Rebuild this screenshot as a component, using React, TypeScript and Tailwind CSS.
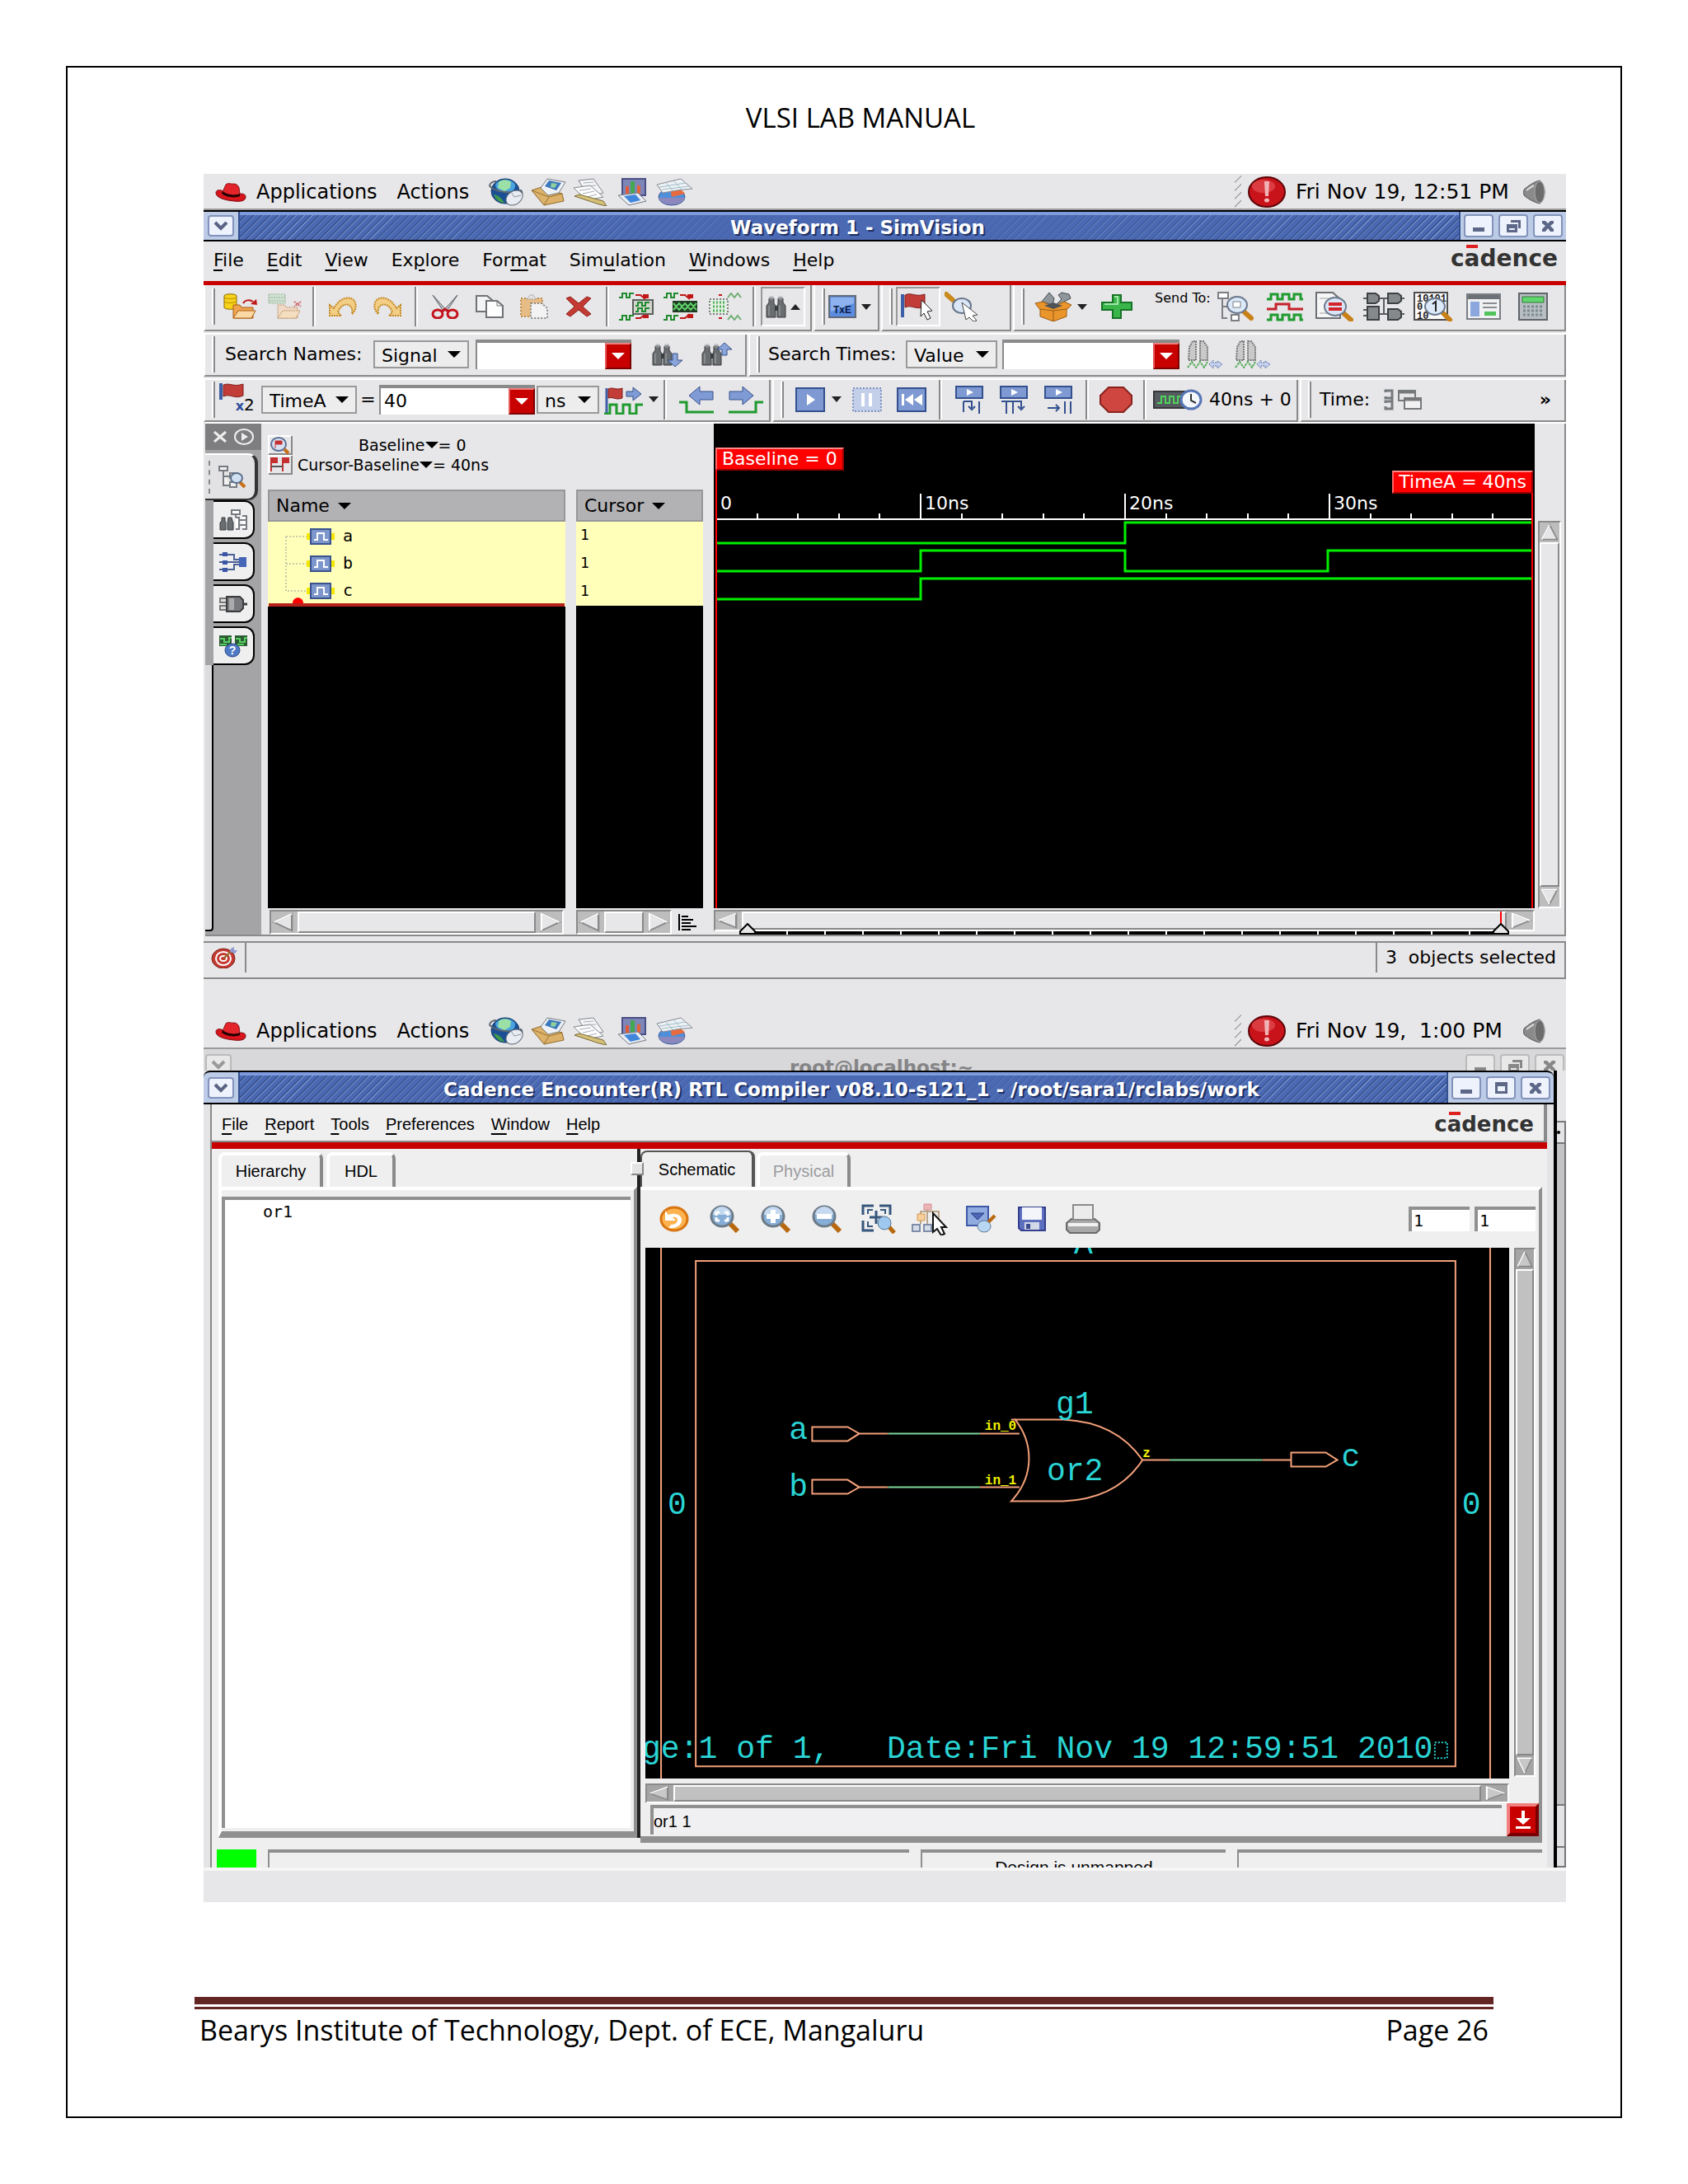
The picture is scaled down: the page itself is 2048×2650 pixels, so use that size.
import { useState } from 'react';
import type { ReactNode } from 'react';

interface IconProps {
  w?: number;
  h?: number;
  children: ReactNode;
}

function Icon({ w = 42, h = 32, children }: IconProps) {
  return (
    <svg width={w} height={h} viewBox={`0 0 ${w} ${h}`} fill="none" className="block shrink-0" aria-hidden="true">
      {children}
    </svg>
  );
}

/* ---------- desktop panel icons ---------- */

const RedHat = () => (
  <Icon w={38} h={24}>
    <path d="M1 13c0-4 5-4 9-2l18 3c5 0 9 0 9 4 0 5-7 6-14 5C12 22 1 19 1 13Z" fill="#d8141c" stroke="#7c0b10" />
    <path d="M9 12 13 3c3-3 7 0 9-1 4 0 6 2 7 5l1 8c-7 3-16 1-21-3Z" fill="#e3242b" stroke="#8b0d12" />
    <path d="M9 11c5 4 14 6 21 3v3c-7 3-17 1-22-3Z" fill="#220203" />
  </Icon>
);

const Globe = () => (
  <Icon w={44} h={34}>
    <ellipse cx="21" cy="16" rx="17" ry="15" fill="#1b4f95" stroke="#123c6e" />
    <path d="M9 8c4-7 20-8 24 0 1 5-3 9-9 9-8 0-15-3-15-9Z" fill="#4aa3dc" />
    <path d="M13 5c5-4 12-3 15 0l-1 7-7 4-8-4Z" fill="#9be0a6" />
    <path d="M7 20c6 1 10 5 13 10-6 0-11-4-13-10Z" fill="#3f9a4c" />
    <path d="M2 10c0-4 4-6 8-6M2 10c10 8 26 9 38 5 2 2 2 4 0 7" stroke="#5d666e" strokeWidth="2" />
    <ellipse cx="32" cy="24" rx="11" ry="8" fill="#e9edf3" stroke="#5f6a77" transform="rotate(-35 32 24)" />
    <path d="m28 17 4 6 8-2" stroke="#8b95a1" />
  </Icon>
);

const Mail = () => (
  <Icon w={44} h={34}>
    <path d="m2 15 12-4 25 8 2 9-24 5Z" fill="#dcb169" stroke="#8f6a2a" />
    <path d="m13 12 8-11 22 4-8 13-13 3Z" fill="#eef1f5" stroke="#767c84" />
    <path d="m18 10 5-7 15 3-6 9Z" fill="#3b78bd" />
    <path d="m26 6 7 1-3 5-5-1Z" fill="#8fd19a" />
    <path d="m2 15 21 8 16-4M23 23l-6 10" stroke="#9a7433" />
  </Icon>
);

const Writer = () => (
  <Icon w={44} h={34}>
    <path d="m8 3 18-2 12 17-18 5Z" fill="#f3f4f6" stroke="#82868c" />
    <path d="m2 12 20-3 16 14-20 4Z" fill="#fdfdfe" stroke="#82868c" />
    <path d="m14 6 12-1m-9 5 12-1M9 15l14-2m-10 6 14-3m-9 7 12-3" stroke="#a9adb4" />
    <path d="m3 22 6-2 29 8 4 6-9-2Z" fill="#d6c178" stroke="#7a6a35" />
  </Icon>
);

const Impress = () => (
  <Icon w={44} h={34}>
    <path d="M10 1h28v20H10Z" fill="#7e86b8" stroke="#4a4f86" strokeWidth="2" />
    <path d="M14 10h4v9h-4Z" fill="#e05a3a" />
    <path d="M20 4h5v15h-5Z" fill="#43a852" />
    <path d="M28 9h4v10h-4Z" fill="#e0663a" />
    <path d="m5 21 24-3 10 10-21 5Z" fill="#e9ecf1" stroke="#747a83" />
    <path d="m12 22 14-2 6 7-12 3Z" fill="#3f86dc" />
  </Icon>
);

const Calc = () => (
  <Icon w={46} h={34}>
    <ellipse cx="20" cy="23" rx="16" ry="10" fill="#4f8fd9" stroke="#3f5c96" />
    <path d="M20 23 18 12c9-1 15 3 18 7Z" fill="#ea6a3d" />
    <path d="M4 24c4 11 28 11 32 0Z" fill="#8c88bd" />
    <path d="m2 8 29-7 14 12-19 2-17 3Z" fill="#eef1f5" stroke="#858b93" />
    <path d="m5 11 32-5M8 14l33-4M12 5l9 10M22 3l10 11" stroke="#a0c0c8" />
  </Icon>
);

const Alert = () => (
  <Icon w={46} h={38}>
    <ellipse cx="23" cy="19" rx="22" ry="18" fill="#c9131a" stroke="#5d0508" strokeWidth="2" />
    <ellipse cx="19" cy="12" rx="14" ry="8" fill="#e8595d" opacity=".6" />
    <path d="M20 6h6l-1 18h-4Z" fill="#f1b4b5" />
    <ellipse cx="23" cy="29" rx="3" ry="2.5" fill="#f1b4b5" />
  </Icon>
);

const Speaker = () => (
  <Icon w={28} h={30}>
    <path d="M2 11c4-3 10-8 18-10 8 5 8 23 0 28-8-2-14-6-18-9-2-2-2-7 0-9Z" fill="#8a8a8a" stroke="#555" />
    <ellipse cx="20" cy="15" rx="6" ry="13" fill="#6c6c6c" stroke="#a9a9a9" />
    <path d="M4 13c4-3 7-5 9-6" stroke="#d8d8d8" strokeWidth="2" />
  </Icon>
);

/* ---------- SimVision toolbar icons ---------- */

const OpenDb = ({ off = false }: { off?: boolean }) => (
  <Icon>
    <g opacity={off ? 0.6 : 1} strokeDasharray={off ? '2 1' : undefined}>
      <path
        d={off ? 'M1 1h20v11H1Z' : 'M1 3c0-3 15-3 15 0v14c0 3-15 3-15 0Z'}
        fill={off ? '#c2e0c2' : '#f7d21b'}
        stroke={off ? '#6c8f6c' : '#8a6a00'}
      />
      <path d={off ? 'M1 5h20M1 9h20' : 'M1 5c3 2 12 2 15 0M1 10c3 2 12 2 15 0'} stroke={off ? '#6c8f6c' : '#b58b00'} />
      <path d="M12 14h8l2 3h14v13H12Z" fill={off ? '#f6d3b2' : '#f0a450'} stroke="#a85c12" />
      <path d="m12 30 6-9h21l-5 9Z" fill="#fcd9a4" stroke="#a85c12" />
      {off ? (
        <path d="m32 10 8 6m0-6-8 6" stroke="#c01818" strokeWidth="2" />
      ) : (
        <>
          <path d="M24 12c2-4 8-5 12-2" stroke="#c01818" strokeWidth="2" />
          <path d="m33 13 8 1-1-7Z" fill="#c01818" />
        </>
      )}
    </g>
  </Icon>
);

const Undo = ({ flip = false }: { flip?: boolean }) => (
  <Icon w={34} h={24}>
    <g transform={flip ? 'matrix(-1 0 0 1 34 0)' : undefined}>
      <path d="M1 10v13h14l-4-4c2-7 8-11 13-9 4 2 5 6 4 11 6-5 6-14 1-18C22-1 12 3 6 14Z" fill="#f3cf86" stroke="#c48720" strokeWidth="2" strokeDasharray="2 1" />
    </g>
  </Icon>
);

const Cut = () => (
  <Icon w={34} h={30}>
    <path d="m2 1 17 19-5-1Zm30 0L15 20l5-1Z" fill="#c4c8cc" stroke="#555b60" />
    <ellipse cx="8" cy="24" rx="6" ry="5" stroke="#c4131c" strokeWidth="3" />
    <ellipse cx="26" cy="24" rx="6" ry="5" stroke="#c4131c" strokeWidth="3" />
    <path d="m13 21 4-3 4 3" stroke="#c4131c" strokeWidth="3" />
  </Icon>
);

const Copy = () => (
  <Icon w={34} h={28}>
    <path d="M1 1h13l6 5v14H1Z" fill="#f4f4f4" stroke="#6f7376" strokeWidth="2" />
    <path d="M13 7h13l7 6v14H13Z" fill="#fdfdfd" stroke="#6f7376" strokeWidth="2" />
    <path d="M26 7v6h7" stroke="#6f7376" />
  </Icon>
);

const Paste = () => (
  <Icon w={34} h={30}>
    <path d="M1 5h26v22H1Z" fill="#e8bd85" stroke="#bd8f4e" strokeWidth="2" strokeDasharray="2 2" />
    <path d="M8 6c0-2 3-2 4-5h4c1 3 4 3 4 5Z" fill="#e0e0e0" stroke="#999" strokeDasharray="2 1" />
    <path d="M13 11h13l7 6v12H13Z" fill="#f3f3f3" stroke="#8c8c8c" strokeWidth="2" strokeDasharray="2 2" />
  </Icon>
);

const Remove = () => (
  <Icon w={34} h={26}>
    <path d="m2 3 5-2 10 8L27 1l5 2-10 10 10 9-5 3-10-8-10 8-5-3 10-9Z" fill="#c43a33" stroke="#8d1f1a" />
  </Icon>
);

const WaveGlyph = ({ mode }: { mode: 'chip' | 'fill' | 'off' }) => {
  const c = mode === 'off' ? '#6fae72' : '#1f8a2c';
  return (
    <Icon w={42} h={34}>
      <path d={mode === 'off' ? 'M24 6l4-5 4 5 4-5 4 5M24 33l4-5 4 5 4-5 4 5' : 'M0 6h4V1h5v5h4V1h5M0 33h4v-5h5v5h4v-5h5'} stroke={c} strokeWidth="2" />
      <path d={mode === 'off' ? 'M13 3h4m-4 28h4' : 'M20 3h6l6 5M20 31h6l6-5'} stroke="#c01818" strokeWidth="2" />
      {mode !== 'off' && <path d="M29 2h7v5h-7zM29 26h7v5h-7z" fill="#c01818" />}
      {mode === 'chip' && (
        <>
          <path d="M17 9h24v17H17Z" fill="#d2d6cf" stroke="#5c605c" strokeWidth="2" />
          <path d="M20 16h3v-4h5v4h4v-4h5M20 23h3v-4h5v4h4v-4h5" stroke="#1f8a2c" strokeWidth="2" />
        </>
      )}
      {mode === 'fill' && (
        <>
          <path d="M11 10h30v14H11Z" fill="#1f3d22" />
          <path d="m12 13 7 8 7-8 7 8 7-8M12 21l7-8 7 8 7-8 7 8" stroke="#5fd069" strokeWidth="2" />
        </>
      )}
      {mode === 'off' && (
        <>
          <path d="M2 8h22v18H2Z" fill="#e4f0e4" stroke="#7d7d7d" strokeWidth="2" strokeDasharray="2 2" />
          <path d="M6 12h14M6 17h14M6 22h14" stroke="#4fae58" strokeWidth="3" strokeDasharray="2 2" />
        </>
      )}
    </Icon>
  );
};

const Binoculars = ({ arrow }: { arrow?: 'up' | 'down' }) => (
  <Icon w={arrow ? 38 : 26} h={30}>
    <path d="M4 5h6v6l2 3V28H1V14l3-4ZM15 5h6v5l3 4v14H14V14l1-3Z" fill="#696d70" stroke="#3a3d3f" />
    <path d="M5 3h4v3H5zM16 3h4v3h-4zM4 14v12M17 14v12" stroke="#a7abae" />
    <path d="M11 14h4v6h-4Z" fill="#3a3d3f" />
    {arrow === 'down' && <path d="M25 14h6v8h6l-9 8-9-8h6Z" fill="#8aa5da" stroke="#37508c" />}
    {arrow === 'up' && <path d="M25 16h6V9h6l-9-8-9 8h6Z" fill="#8aa5da" stroke="#37508c" />}
  </Icon>
);

const SearchTime = () => (
  <Icon w={44} h={34}>
    <path d="M3 8 7 1h4v23H2ZM16 1h4l5 7v16h-9Z" fill="#c9c9c9" stroke="#777" strokeWidth="2" strokeDasharray="2 1" />
    <path d="m1 33 5-7 5 7 5-7 5 7 4-7" stroke="#57ad5d" strokeWidth="2" strokeDasharray="3 1" />
    <path d="m27 29 5-5v3h5v-2l6 4-6 5v-3h-5v3Z" fill="#c4d0ec" stroke="#5f76b0" strokeDasharray="2 1" />
  </Icon>
);

const TxE = () => (
  <Icon w={34} h={28}>
    <path d="M1 1h32v26H1Z" fill="#5c8de0" stroke="#636b7a" strokeWidth="2" />
    <path d="M3 3h28v7L3 20Z" fill="#8db2ef" />
    <text x="17" y="22" textAnchor="middle" fontFamily="Liberation Sans" fontSize="12" fontWeight="700" fill="#0c1c46">TxE</text>
  </Icon>
);

const Flag = () => (
  <Icon w={44} h={34}>
    <path d="M3 2v28" stroke="#3c5fa8" strokeWidth="4" />
    <path d="M6 3c8-4 12 3 24-1v15c-10 5-16-3-24 1Z" fill="#c23d38" stroke="#7e1d1a" />
    <path d="m26 9 13 13-6 1 4 8-4 2-4-8-4 4Z" fill="#fff" stroke="#222" />
  </Icon>
);

const FlagX2 = () => (
  <div className="flex w-14 flex-col pr-2">
    <Icon w={36} h={20}>
      <path d="M3 0v20" stroke="#3c5fa8" strokeWidth="4" />
      <path d="M6 2c8-3 12 3 24-1v14c-10 5-16-3-24 1Z" fill="#c23d38" stroke="#7e1d1a" />
    </Icon>
    <span className="-mt-1 self-end text-xl leading-5">
      <b className="text-base text-[#2b4b9b]">x</b>2
    </span>
  </div>
);

const ZoomCursor = () => (
  <Icon w={44} h={36}>
    <path d="m2 3 8 7" stroke="#c98b1e" strokeWidth="6" strokeLinecap="round" />
    <ellipse cx="21" cy="17" rx="11" ry="9" fill="#dbe7f7" stroke="#66748a" strokeWidth="2" />
    <path d="m21 13 19 15-6 1 5 6-4 1-5-5-4 3Z" fill="#fff" stroke="#444" />
  </Icon>
);

const Toolbox = () => (
  <Icon w={46} h={36}>
    <path d="m9 12 9-11 6 7-2 8ZM27 15l6-6-4-5 4-3 9 2 2 5-6 3-7 5Z" fill="#8f979c" stroke="#41484d" />
    <path d="m1 14 9-2 13 6 13-6 9 4-6 6v8l-16 6-16-6v-8Z" fill="#e9952c" stroke="#9c5b10" />
    <path d="m12 17 11-4 11 4-11 4Z" fill="#4e5357" />
    <path d="M23 23v13M7 21l16 2 16-2" stroke="#9c5b10" />
  </Icon>
);

const Plus = () => (
  <Icon w={38} h={30}>
    <path d="M14 1h10v9h13v9H24v10H14V19H1v-9h13Z" fill="#39b54a" stroke="#177326" strokeWidth="2" />
    <path d="M16 3h4v9H4" stroke="#a3e6aa" strokeWidth="2" />
  </Icon>
);

const HierZoom = () => (
  <Icon w={44} h={36}>
    <path d="M6 8v24h6M6 18h8" stroke="#7b7f83" strokeWidth="2" />
    <path d="M1 1h12v7H1ZM17 28h9v7h-9Z" stroke="#7b7f83" strokeWidth="2" fill="#fff" />
    <path d="m32 24 9 8" stroke="#c98018" strokeWidth="6" strokeLinecap="round" />
    <ellipse cx="24" cy="16" rx="12" ry="10" fill="#dce9f8" stroke="#6b7a8e" strokeWidth="2" />
    <path d="M19 12h9v7h-9Z" fill="#fff" stroke="#7b7f83" />
  </Icon>
);

const SendWave = () => (
  <Icon w={44} h={36}>
    <path d="M0 9h5V3h8v6h6V3h8v6h6V3h8v6h3M0 34h5v-6h8v6h6v-6h8v6h6v-6h8v6h3" stroke="#1f9a2e" strokeWidth="3" />
    <path d="M0 21h11v-6h16v6h17" stroke="#c4232a" strokeWidth="3" />
  </Icon>
);

const DocZoom = () => (
  <Icon w={46} h={36}>
    <path d="M1 1h20l9 8v23H1Z" fill="#f6f6f6" stroke="#6c7074" strokeWidth="2" />
    <path d="M5 8h12M5 26h18" stroke="#9b9fa3" />
    <path d="m34 26 9 8" stroke="#c98018" strokeWidth="6" strokeLinecap="round" />
    <ellipse cx="24" cy="18" rx="13" ry="11" fill="#d9e5f6" stroke="#6b7a8e" strokeWidth="2" />
    <path d="M16 13h16v4H16zm0 6h16v4H16z" fill="#d5242b" />
  </Icon>
);

const Schem = () => (
  <Icon w={50} h={34}>
    <path d="M0 7h50M0 21h8M0 28h8M20 26h30M25 7v19" stroke="#5a5e61" strokeWidth="2" />
    <path d="M5 1h10l4 3v6l-4 3H5ZM30 1h12l4 3v6l-4 3H30ZM5 17h14v16H5ZM30 20h12l4 3v7l-4 3H30Z" fill="#86898c" stroke="#3e4143" strokeWidth="2" />
  </Icon>
);

const BinZoom = () => (
  <Icon w={48} h={36}>
    <path d="M1 1h40v33H1Z" fill="#fbfbfb" stroke="#4d4d4d" strokeWidth="2" />
    <text x="4" y="12" fontFamily="Liberation Mono" fontSize="12" fontWeight="700" fill="#222">10101</text>
    <text x="4" y="22" fontFamily="Liberation Mono" fontSize="12" fontWeight="700" fill="#222">0</text>
    <text x="4" y="33" fontFamily="Liberation Mono" fontSize="12" fontWeight="700" fill="#222">10</text>
    <path d="m36 26 8 8" stroke="#c98018" strokeWidth="6" strokeLinecap="round" />
    <ellipse cx="26" cy="18" rx="12" ry="10" fill="#dce9f8" stroke="#6b7a8e" strokeWidth="2" />
    <path d="m23 15 4-3v12" stroke="#222" strokeWidth="2" />
  </Icon>
);

const Form = () => (
  <Icon w={42} h={32}>
    <path d="M1 1h40v30H1Z" fill="#f0f1f2" stroke="#7a7e82" strokeWidth="2" />
    <path d="M2 2h38v5H2Z" fill="#6c7178" />
    <path d="M5 10h11v18H5Z" fill="#8ba7dd" />
    <path d="M20 12h17M20 17h17" stroke="#8b8f93" strokeWidth="2" />
    <path d="M22 22h14v5H22Z" fill="#4fc45b" />
  </Icon>
);

const Calculator = () => (
  <Icon w={36} h={34}>
    <path d="M1 1h34v32H1Z" fill="#b9bec2" stroke="#60666b" strokeWidth="2" />
    <path d="M5 5h26v7H5Z" fill="#5fd76c" stroke="#34793c" />
    <path d="M6 17h24M6 22h24M6 27h24" stroke="#7b8b94" strokeWidth="3" strokeDasharray="3 2" />
  </Icon>
);

const JumpFlag = () => (
  <Icon w={50} h={36}>
    <path d="M3 4v30" stroke="#3c5fa8" strokeWidth="3" />
    <path d="M5 5c6-3 9 2 17-1v12c-8 3-11-2-17 0Z" fill="#c23d38" stroke="#7e1d1a" />
    <path d="M27 8h8V3l10 8-10 8v-5h-8Z" fill="#7f9bd6" stroke="#37508c" />
    <path d="M0 35h7V24h8v11h8V24h8v11h8V24h8" stroke="#1f9a2e" strokeWidth="3" />
  </Icon>
);

const EdgeArrow = ({ right = false }: { right?: boolean }) => (
  <Icon w={44} h={34}>
    <g transform={right ? 'matrix(-1 0 0 1 44 0)' : undefined}>
      <path d="M12 12 25 1v6h16v10H25v6Z" fill="#7f9bd6" stroke="#37508c" />
      <path d="M0 20h9v12h33" stroke="#1f9a2e" strokeWidth="3" />
    </g>
  </Icon>
);

const Play = ({ kind }: { kind: 'play' | 'pause' | 'rewind' }) => (
  <Icon w={36} h={30}>
    <path
      d="M1 1h34v28H1Z"
      fill={kind === 'pause' ? '#c3cfe9' : '#7f9ad2'}
      stroke={kind === 'pause' ? '#7f92c0' : '#33508f'}
      strokeWidth="2"
      strokeDasharray={kind === 'pause' ? '2 2' : undefined}
    />
    {kind === 'play' && <path d="m14 8 10 7-10 7Z" fill="#fff" />}
    {kind === 'pause' && <path d="M13 7v16M22 7v16" stroke="#fff" strokeWidth="4" />}
    {kind === 'rewind' && <path d="M6 8h3v14H6zM20 8v14L10 15ZM31 8v14l-10-7Z" fill="#fff" />}
  </Icon>
);

const Step = ({ tail }: { tail: string }) => (
  <Icon w={34} h={34}>
    <path d="M1 1h32v14H1Z" fill="#7f9ad2" stroke="#33508f" strokeWidth="2" />
    <path d="m14 4 8 4-8 4Z" fill="#fff" />
    <path d={tail} stroke="#33508f" strokeWidth="2" />
  </Icon>
);

const StopSign = () => (
  <Icon w={40} h={32}>
    <path d="M11 1h18l10 10v10L29 31H11L1 21V11Z" fill="#cf4640" stroke="#8a211d" strokeWidth="2" />
  </Icon>
);

const WaveClock = () => (
  <Icon w={60} h={26}>
    <path d="M1 3h40v20H1Z" fill="#565b60" stroke="#33373a" strokeWidth="2" />
    <path d="M5 17h5v-8h5v8h5v-8h5v8h5v-8h4" stroke="#4fd45b" strokeWidth="2" />
    <ellipse cx="46" cy="13" rx="12" ry="11" fill="#f4f8fd" stroke="#5775b5" strokeWidth="3" />
    <path d="M46 6v8l6 3" stroke="#333" strokeWidth="2" />
  </Icon>
);

const TimeLink = () => (
  <Icon w={48} h={26}>
    <path d="M3 4V2h8v9H3V9M3 17v-2h8v9H3v-3M11 11v4" stroke="#76797c" strokeWidth="3" />
    <path d="M19 2h20v12H19Z" fill="#e6e6e6" stroke="#76797c" strokeWidth="2" />
    <path d="M26 11h20v13H26Z" fill="#f2f2f2" stroke="#76797c" strokeWidth="2" />
    <path d="M19 4h20M26 13h20" stroke="#76797c" strokeWidth="3" />
  </Icon>
);

/* ---------- small shared parts ---------- */

const Caret = ({ white = false }: { white?: boolean }) => (
  <svg width="16" height="8" viewBox="0 0 16 8" className="shrink-0" aria-hidden="true">
    <path d="M0 0h16L8 8Z" fill={white ? '#fff' : '#000'} />
  </svg>
);

const SmallCaret = ({ up = false }: { up?: boolean }) => (
  <svg width="12" height="7" viewBox="0 0 12 7" className="shrink-0" aria-hidden="true">
    <path d={up ? 'M0 7h12L6 0Z' : 'M0 0h12L6 7Z'} fill="#222" />
  </svg>
);

const Grip = () => <div className="ml-2 mr-1 h-11 w-1 shrink-0 border-l-2 border-r-2 border-l-white border-r-[#888]" />;
const Sep = () => <div className="mx-1.5 h-12 w-1 shrink-0 border-l-2 border-r-2 border-l-[#888] border-r-white" />;

function Slot({ label, children, className = 'w-[54px]' }: { label: string; children: ReactNode; className?: string }) {
  return (
    <button type="button" aria-label={label} className={`flex h-12 shrink-0 items-center justify-center ${className}`}>
      {children}
    </button>
  );
}

function Bar({ className, children }: { className: string; children: ReactNode }) {
  return (
    <div className={`flex items-center overflow-hidden border-b-2 border-l-2 border-r-2 border-b-[#8a8a8a] border-l-white border-r-[#8a8a8a] pb-0.5 ${className}`}>
      {children}
    </div>
  );
}

function Picker({ label, options, className }: { label: string; options: string[]; className: string }) {
  return (
    <span className={`relative flex h-[34px] shrink-0 items-center border-2 border-[#999] bg-[#ededee] ${className}`}>
      <select aria-label={label} className="h-full w-full appearance-none bg-transparent pl-2 outline-none">
        {options.map((o) => (
          <option key={o}>{o}</option>
        ))}
      </select>
      <span className="pointer-events-none absolute right-2">
        <Caret />
      </span>
    </span>
  );
}

function Combo({ label, initial = '', className }: { label: string; initial?: string; className: string }) {
  const [value, setValue] = useState(initial);
  return (
    <span className={`flex h-9 shrink-0 border-l-2 border-t-4 border-[#8a8a8a] bg-white ${className}`}>
      <input aria-label={label} value={value} onChange={(e) => setValue(e.target.value)} className="min-w-0 flex-1 px-1 outline-none" />
      <button type="button" aria-label={`${label} history`} className="flex w-8 items-center justify-center border-2 border-b-[#7a0000] border-l-[#e65a5a] border-r-[#7a0000] border-t-[#f08080] bg-[#c80000]">
        <Caret white />
      </button>
    </span>
  );
}

function Menu({ items }: { items: [string, string, string][] }) {
  return items.map(([a, key, b]) => (
    <button key={a + key + b} type="button">
      {a}
      <u className="underline-offset-4">{key}</u>
      {b}
    </button>
  ));
}

const Cadence = ({ className }: { className: string }) => (
  <span className={`font-bold leading-8 text-[#333] ${className}`}>
    c
    <span className="relative">
      a<span className="absolute left-0.5 top-0 h-1 w-3.5 bg-[#e02020]" />
    </span>
    dence
  </span>
);

const WinMenuIcon = ({ off = false }: { off?: boolean }) => (
  <span className={`flex h-[26px] w-8 items-center justify-center rounded border-2 ${off ? 'border-[#bbb] bg-[#e8e8e8]' : 'border-[#8292bb] bg-[#edf2fc]'}`}>
    <svg width="18" height="12" viewBox="0 0 18 12" aria-hidden="true">
      <path d="m2 2 7 7 7-7" fill="none" stroke={off ? '#999' : '#596383'} strokeWidth="4" />
    </svg>
  </span>
);

const WIN_SHAPES = {
  min: 'M4 11h14v5H4Z',
  restore: 'M8 2h12v10h-3V5H8Zm-5 5h13v10H3Zm3 5v2h7v-2Z',
  max: 'M4 2h15v14H4Zm3 5v6h9V7Z',
  close: 'M4 3h4l3 3 3-3h4v3l-4 3 4 4v3h-4l-3-4-3 4H4v-3l4-4-4-3Z',
};

function WinButtons({ kinds, off = false }: { kinds: (keyof typeof WIN_SHAPES)[]; off?: boolean }) {
  return (
    <div className="flex gap-1.5">
      {kinds.map((k) => (
        <button
          key={k}
          type="button"
          aria-label={k}
          className={`flex h-7 w-9 items-center justify-center rounded border-2 ${off ? 'border-[#bbb] bg-[#e8e8e8]' : 'border-[#8292bb] bg-[#edf2fc]'}`}
        >
          <svg width="22" height="18" viewBox="0 0 22 18" aria-hidden="true">
            <path d={WIN_SHAPES[k]} fill={off ? '#888' : '#5d6788'} fillRule="evenodd" />
          </svg>
        </button>
      ))}
    </div>
  );
}

function TitleBar({ title, kinds, className }: { title: string; kinds: (keyof typeof WIN_SHAPES)[]; className: string }) {
  return (
    <div className={`flex items-stretch overflow-hidden border-b-2 border-t-2 border-black bg-[#bccbe6] ${className}`}>
      <div className="flex w-11 shrink-0 items-center justify-center border-r-2 border-[#33508f]">
        <WinMenuIcon />
      </div>
      <div className="flex flex-1 items-center justify-center border-t-4 border-[#7d9bdc] bg-[linear-gradient(90deg,transparent,#4b69b3_50%,transparent),repeating-linear-gradient(135deg,#4b69b3_0px,#4b69b3_4px,#2b4580_5px,#8aa5de_7px)] pl-5">
        <span className="text-[23px] font-bold leading-7 text-white [text-shadow:2px_2px_0_#1c2f63]">{title}</span>
      </div>
      <div className="flex shrink-0 items-center border-l-2 border-[#33508f] px-1">
        <WinButtons kinds={kinds} />
      </div>
    </div>
  );
}

function DesktopPanel({ time }: { time: string }) {
  return (
    <div className="flex h-11 items-center border-b-2 border-[#9a9a9a] pl-3.5 pr-6 pt-0.5 text-2xl">
      <RedHat />
      <button type="button" className="ml-3">Applications</button>
      <button type="button" className="ml-6">Actions</button>
      <div className="ml-[19px] flex">
        {[Globe, Mail, Writer, Impress, Calc].map((I, i) => (
          <span key={i} className="flex w-[51px] justify-center">
            <I />
          </span>
        ))}
      </div>
      <div className="ml-auto h-10 w-2 bg-[repeating-linear-gradient(135deg,transparent_0px,transparent_5px,#888_6px,transparent_7px)]" />
      <span className="ml-2">
        <Alert />
      </span>
      <span className="ml-3 w-[276px] whitespace-pre text-[25px]">{time}</span>
      <Speaker />
    </div>
  );
}

const ARROWS = {
  left: 'M22 3v22L3 14Z',
  right: 'M6 3v22l19-11Z',
  up: 'M3 24h22L14 3Z',
  down: 'M3 4h22L14 25Z',
};

const HIGHLIGHTS = {
  left: 'M3 14 22 3',
  right: 'M6 25V3l19 11',
  up: 'M3 24 14 3',
  down: 'M14 25 3 4h22',
};

function ArrowBox({ dir, dark = false }: { dir: keyof typeof ARROWS; dark?: boolean }) {
  return (
    <svg
      viewBox="0 0 28 28"
      preserveAspectRatio="none"
      className={dir === 'left' || dir === 'right' ? 'h-full w-8 shrink-0' : 'h-6 w-full shrink-0'}
      aria-hidden="true"
    >
      <path d="M0 0h28v28H0Z" fill={dark ? '#a5a5a5' : '#bdbdbd'} />
      <path d={ARROWS[dir]} fill={dark ? '#c8c8c8' : '#e6e6e8'} stroke="#888" strokeWidth="2" />
      <path d={HIGHLIGHTS[dir]} fill="none" stroke="#fff" strokeWidth="2" />
    </svg>
  );
}

function Scroll({ vertical = false, dark = false, className = '' }: { vertical?: boolean; dark?: boolean; className?: string }) {
  return (
    <div className={`flex items-center border-2 border-b-white border-l-[#8a8a8a] border-r-white border-t-[#8a8a8a] bg-[#c6c6c8] ${vertical ? 'flex-col' : ''} ${className}`}>
      <ArrowBox dir={vertical ? 'up' : 'left'} dark={dark} />
      <div className={`flex-1 border-2 border-b-[#888] border-l-white border-r-[#888] border-t-white ${vertical ? 'w-full' : 'h-full'} ${dark ? 'bg-[#c2c1c2]' : 'bg-[#e7e6e8]'}`} />
      <ArrowBox dir={vertical ? 'down' : 'right'} dark={dark} />
    </div>
  );
}

/* ---------- waveform window ---------- */

const SIGNALS = [
  { name: 'a', value: '1', path: 'M0 28H497V3H992', tree: 'M1 18v16M1 18h28' },
  { name: 'b', value: '1', path: 'M0 28H249V3H497V28H743V3H992', tree: 'M1 0v33M1 18h28' },
  { name: 'c', value: '1', path: 'M0 28H249V3H992', tree: 'M1 0v18h28' },
];

const RULER = ['0', '10ns', '20ns', '30ns'];

function SideTabs() {
  const tab = 'ml-2.5 mr-2 flex h-[47px] items-center justify-center rounded-r-xl border-b-2 border-r-2 border-t-2 border-black bg-[#efeff0]';
  return (
    <div className="flex w-[68px] shrink-0 flex-col bg-[#a4a4a6]">
      <div className="flex h-8 items-center justify-center gap-2 bg-[#7e7e80]">
        <svg width="18" height="14" viewBox="0 0 18 14" aria-hidden="true">
          <path d="m2 1 14 12M16 1 2 13" stroke="#eee" strokeWidth="3" />
        </svg>
        <svg width="24" height="20" viewBox="0 0 24 20" aria-hidden="true">
          <ellipse cx="12" cy="10" rx="11" ry="9" fill="none" stroke="#eee" strokeWidth="2" />
          <path d="m9 5 8 5-8 5Z" fill="#eee" />
        </svg>
      </div>
      <button type="button" aria-label="Design browser" className="mr-1 mt-1 flex h-[57px] items-center gap-2.5 rounded-r-xl border-b-2 border-r-4 border-t-2 border-b-[#333] border-r-[#333] border-t-white bg-[#e2e2e4] pl-1">
        <span className="h-10 border-l-2 border-dashed border-[#888]" />
        <Icon w={34} h={28}>
          <path d="M1 1h10v5H1ZM6 6v18h8M6 13h8M14 9h8v6h-8ZM14 20h8v6h-8Z" fill="#f2f2f2" stroke="#777b80" strokeWidth="2" />
          <path d="m26 20 6 6" stroke="#c9701a" strokeWidth="4" />
          <ellipse cx="22" cy="15" rx="7" ry="6" fill="#cfe0f2" stroke="#5a6f8c" strokeWidth="2" />
        </Icon>
      </button>
      <div className="flex flex-1 flex-col gap-1">
        <button type="button" aria-label="Search" className={tab}>
          <Icon w={34} h={26}>
            <path d="M15 1h10v5H15ZM20 6v4M20 10h4v14h-4M28 8h5v16h-5M24 13h8M24 19h8" stroke="#777b80" strokeWidth="2" fill="#fff" />
            <path d="M3 10h4v4l1 2v9H1v-9l2-2ZM11 10h4l1 4 1 2v9h-7v-9Z" fill="#6b6e71" stroke="#3b3d3f" />
          </Icon>
        </button>
        <button type="button" aria-label="Groups" className={tab}>
          <Icon w={34} h={24}>
            <path d="M0 3h18v6h6M0 12h24M0 21h18v-6h6" stroke="#4a5f95" strokeWidth="2" />
            <path d="M4 0h6v5H4zM4 10h6v5H4zM4 19h6v5H4z" fill="#3957a5" />
            <path d="M24 6h9v12h-9Z" fill="#4565b8" />
          </Icon>
        </button>
        <button type="button" aria-label="Schematic" className={tab}>
          <Icon w={34} h={22}>
            <path d="M1 4h9v5H1zM1 13h9v5H1z" fill="#ddd" stroke="#777" strokeWidth="2" />
            <path d="M9 2h16l4 4v10l-4 4H9Z" fill="#77797c" stroke="#3b3d3f" strokeWidth="2" />
            <path d="M12 4h6v14h-6Z" fill="#a9abad" />
            <path d="M30 11h4" stroke="#3b3d3f" strokeWidth="3" />
          </Icon>
        </button>
        <button type="button" aria-label="Compare" className={tab}>
          <Icon w={34} h={28}>
            <path d="M0 1h15v13H0zM19 1h15v13H19z" fill="#2c5a33" />
            <path d="M1 5h5v4h6V4h3M20 5h5v4h6V4h3M1 12h8M22 12h8" stroke="#56cf62" strokeWidth="2" />
            <ellipse cx="16" cy="19" rx="9" ry="8" fill="#4f78c4" stroke="#2c4b88" />
            <text x="16" y="24" textAnchor="middle" fontFamily="Liberation Sans" fontSize="14" fontWeight="700" fill="#fff">?</text>
          </Icon>
        </button>
        <div className="-mt-1 mb-1 w-2.5 flex-1 rounded-br border-b-2 border-r-2 border-black bg-[#dcdcde]" />
      </div>
    </div>
  );
}

function SignalPanes() {
  const head = 'h-[37px] border-2 border-[#97969a] bg-[#b2b1b4] px-2 text-left font-normal';
  return (
    <div className="ml-2 mr-[13px] flex w-[528px] shrink-0 flex-col">
      <div className="flex h-20 flex-col justify-center pb-1 text-[19px] leading-6">
        <div className="flex items-center">
          <Icon w={30} h={24}>
            <path d="M1 23V1h28" stroke="#fff" strokeWidth="2" />
            <path d="M29 1v22H1" stroke="#888" strokeWidth="2" />
            <ellipse cx="13" cy="11" rx="9" ry="8" fill="#d7e2f3" stroke="#5c6f94" strokeWidth="2" />
            <path d="M9 16V7h8v4H9" fill="#c43030" stroke="#c43030" />
            <path d="m20 17 5 5" stroke="#c9701a" strokeWidth="4" />
          </Icon>
          <span className="ml-20 flex items-center">
            Baseline
            <Caret />= 0
          </span>
        </div>
        <div className="flex items-center">
          <Icon w={30} h={24}>
            <path d="M1 23V1h28" stroke="#fff" strokeWidth="2" />
            <path d="M29 1v22H1" stroke="#888" strokeWidth="2" />
            <path d="M4 20V4h7v5H4M18 20V4h7v5h-7" fill="#c43030" stroke="#c43030" strokeWidth="2" />
            <path d="M4 14h14" stroke="#555" strokeWidth="2" />
          </Icon>
          <span className="ml-1.5 flex items-center">
            Cursor-Baseline
            <Caret />= 40ns
          </span>
        </div>
      </div>
      <div className="flex flex-1 justify-between">
        <div className="flex w-[361px] flex-col bg-black">
          <table className="w-full border-collapse border-b-4 border-[#b8211b] bg-[#ffffba]">
            <thead>
              <tr>
                <th className={head}>
                  <span className="flex items-center gap-2.5">
                    Name <Caret />
                  </span>
                </th>
              </tr>
            </thead>
            <tbody className="font-['DejaVu_Sans_Mono',monospace] text-xl">
              {SIGNALS.map((s) => (
                <tr key={s.name} className="h-[33px]">
                  <td className="p-0">
                    <span className="flex h-[33px] items-center pl-5">
                      <Icon w={62} h={33}>
                        <path d={s.tree} stroke="#999" strokeDasharray="2 2" />
                        {s.name === 'c' && <path d="M9 33c0-9 13-9 13 0Z" fill="#f00" />}
                        <path d="M26 14h34v8H26Z" fill="#f4e800" />
                        <path d="M31 9h24v18H31Z" fill="#7d96cb" stroke="#39538f" strokeWidth="2" />
                        <path d="M35 22h4v-8h8v8h5" stroke="#fff" strokeWidth="2" />
                      </Icon>
                      <span className="ml-2">{s.name}</span>
                    </span>
                  </td>
                </tr>
              ))}
            </tbody>
          </table>
        </div>
        <div className="flex w-[154px] flex-col bg-black">
          <table className="w-full border-collapse bg-[#ffffba]">
            <thead>
              <tr>
                <th className={head}>
                  <span className="flex items-center gap-2.5">
                    Cursor <Caret />
                  </span>
                </th>
              </tr>
            </thead>
            <tbody className="font-['DejaVu_Sans_Mono',monospace] text-lg">
              {SIGNALS.map((s) => (
                <tr key={s.name} className="h-[34px]">
                  <td className="px-1 pb-0.5 pt-0 leading-8">{s.value}</td>
                </tr>
              ))}
            </tbody>
          </table>
        </div>
      </div>
      <div className="flex h-8 justify-between pt-0.5">
        <Scroll className="ml-0.5 w-[357px]" />
        <div className="flex w-[154px] items-center">
          <Scroll className="h-full w-[116px]" />
          <span className="mx-auto">
            <Icon w={24} h={20}>
              <path d="M2 0v20M5 3h8M5 7h14M5 11h11M5 15h18M5 19h11" stroke="#000" strokeWidth="2" />
            </Icon>
          </span>
        </div>
      </div>
    </div>
  );
}

function WavePane() {
  const marker = 'border-2 border-b-[#900] border-l-[#f66] border-r-[#900] border-t-[#f88] bg-[#f00] px-1.5 leading-6';
  return (
    <div className="flex min-w-0 flex-1 flex-col">
      <div className="relative flex flex-1 flex-col border-x-2 border-black bg-black text-white">
        <div className="mt-[29px] flex">
          <span className={marker}>Baseline = 0</span>
        </div>
        <div className="flex justify-end">
          <span className={marker}>TimeA = 40ns</span>
        </div>
        <div className="flex h-8 border-b-2 border-white">
          {RULER.map((t, i) => (
            <div key={t} className={`relative flex-1 border-l-2 pl-1 leading-6 ${i ? 'border-white' : 'border-transparent'}`}>
              {t}
              <div className="absolute inset-x-0 bottom-0 flex h-1.5 justify-evenly">
                {[1, 2, 3, 4].map((k) => (
                  <span key={k} className="w-0.5 bg-white" />
                ))}
              </div>
            </div>
          ))}
        </div>
        {SIGNALS.map((s) => (
          <svg key={s.name} viewBox="0 0 992 34" preserveAspectRatio="none" className="h-[34px] w-full" aria-hidden="true">
            <path d={s.path} fill="none" stroke="#00f000" strokeWidth="3" />
          </svg>
        ))}
        <span className="absolute bottom-0 left-0 top-14 w-0.5 bg-[#f00]" />
        <span className="absolute bottom-0 right-0 top-[84px] w-0.5 bg-[#f00]" />
      </div>
      <div className="relative h-8 pt-0.5">
        <Scroll className="h-[26px]" />
        <div className="mx-11 h-1 bg-[repeating-linear-gradient(90deg,#000_0px,#000_44px,#fff_44px,#fff_46px)]" />
        <svg width="22" height="14" viewBox="0 0 22 14" className="absolute bottom-0 left-[30px]" aria-hidden="true">
          <path d="m11 1 9 9v3H2v-3Z" fill="#e6e6e6" stroke="#000" strokeWidth="2" />
        </svg>
        <span className="absolute right-10 top-1 h-4 w-0.5 bg-[#f00]" />
        <svg width="22" height="14" viewBox="0 0 22 14" className="absolute bottom-0 right-[30px]" aria-hidden="true">
          <path d="m11 1 9 9v3H2v-3Z" fill="#e6e6e6" stroke="#000" strokeWidth="2" />
        </svg>
      </div>
    </div>
  );
}

function SimVision() {
  return (
    <section className="bg-[#e7e6e8] text-[22px]">
      <DesktopPanel time="Fri Nov 19, 12:51 PM" />
      <TitleBar title="Waveform 1 - SimVision" kinds={['min', 'restore', 'close']} className="h-[38px]" />
      <div className="flex h-12 items-center gap-7 pb-1 pl-3 pr-2.5">
        <Menu
          items={[
            ['', 'F', 'ile'],
            ['', 'E', 'dit'],
            ['', 'V', 'iew'],
            ['Ex', 'p', 'lore'],
            ['For', 'm', 'at'],
            ['Sim', 'u', 'lation'],
            ['', 'W', 'indows'],
            ['', 'H', 'elp'],
          ]}
        />
        <span className="ml-auto">
          <Cadence className="text-[28px]" />
        </span>
      </div>
      <div className="h-[5px] bg-[#c80000]" />

      <div className="flex h-14 gap-0.5">
        <Bar className="w-[738px]">
          <Grip />
          <Slot label="Open database"><OpenDb /></Slot>
          <Slot label="Close database"><OpenDb off /></Slot>
          <Sep />
          <Slot label="Undo"><Undo /></Slot>
          <Slot label="Redo"><Undo flip /></Slot>
          <Sep />
          <Slot label="Cut"><Cut /></Slot>
          <Slot label="Copy"><Copy /></Slot>
          <Slot label="Paste"><Paste /></Slot>
          <Slot label="Delete"><Remove /></Slot>
          <Sep />
          <Slot label="Expand"><WaveGlyph mode="chip" /></Slot>
          <Slot label="Overlay"><WaveGlyph mode="fill" /></Slot>
          <Slot label="Collapse"><WaveGlyph mode="off" /></Slot>
          <Sep />
          <Slot label="Find" className="w-[54px] gap-1 border-2 border-b-white border-l-[#999] border-r-white border-t-[#999]">
            <Binoculars />
            <SmallCaret up />
          </Slot>
        </Bar>
        <Bar className="w-20">
          <Grip />
          <Slot label="Trace to editor" className="gap-1.5"><TxE /><SmallCaret /></Slot>
        </Bar>
        <Bar className="w-[158px]">
          <Grip />
          <Slot label="Cursor mode" className="w-[54px] border-2 border-b-white border-l-[#999] border-r-white border-t-[#999]"><Flag /></Slot>
          <Slot label="Zoom mode"><ZoomCursor /></Slot>
        </Bar>
        <Bar className="flex-1">
          <Grip />
          <Slot label="Tools" className="ml-2 gap-1.5"><Toolbox /><SmallCaret /></Slot>
          <Slot label="Add" className="ml-1.5 w-[60px]"><Plus /></Slot>
          <span className="ml-4 self-start pt-1.5 text-base leading-5">Send To:</span>
          <div className="mr-2 flex flex-1 justify-around">
            <Slot label="Design browser"><HierZoom /></Slot>
            <Slot label="Waveform"><SendWave /></Slot>
            <Slot label="Source browser"><DocZoom /></Slot>
            <Slot label="Schematic tracer"><Schem /></Slot>
            <Slot label="Memory viewer"><BinZoom /></Slot>
            <Slot label="Register"><Form /></Slot>
            <Slot label="Calculator"><Calculator /></Slot>
          </div>
        </Bar>
      </div>

      <div className="mt-0.5 flex h-[53px] gap-0.5 border-t-2 border-white">
        <Bar className="w-[659px]">
          <Grip />
          <span className="ml-2 w-[180px] whitespace-nowrap">Search Names:</span>
          <Picker label="Name kind" options={['Signal', 'Scope']} className="w-[116px]" />
          <Combo label="Search names" className="ml-2 w-[189px]" />
          <Slot label="Find next" className="ml-3.5 w-[60px]"><Binoculars arrow="down" /></Slot>
          <Slot label="Find previous" className="w-[60px]"><Binoculars arrow="up" /></Slot>
        </Bar>
        <Bar className="flex-1">
          <Grip />
          <span className="ml-1.5 w-[167px] whitespace-nowrap">Search Times:</span>
          <Picker label="Time kind" options={['Value', 'Edge']} className="w-[111px]" />
          <Combo label="Search times" className="ml-1.5 w-[215px]" />
          <Slot label="Previous time" className="ml-0.5 w-[58px]"><SearchTime /></Slot>
          <Slot label="Next time" className="w-[58px]"><SearchTime /></Slot>
        </Bar>
      </div>

      <div className="mt-0.5 flex h-[53px] gap-0.5 border-t-2 border-white">
        <Bar className="w-[688px]">
          <Grip />
          <FlagX2 />
          <Picker label="Cursor" options={['TimeA', 'Baseline']} className="w-[116px]" />
          <span className="w-[30px] text-center">=</span>
          <Combo label="Cursor time" initial="40" className="w-[189px]" />
          <Picker label="Unit" options={['ns', 'ps']} className="ml-0.5 w-[76px]" />
          <Slot label="Go to" className="ml-1.5 gap-1"><JumpFlag /><SmallCaret /></Slot>
          <Sep />
          <Slot label="Previous edge" className="ml-0.5 w-[58px]"><EdgeArrow /></Slot>
          <Slot label="Next edge" className="w-[58px]"><EdgeArrow right /></Slot>
        </Bar>
        <Bar className="w-[638px]">
          <Grip />
          <Slot label="Run" className="ml-2.5 gap-2"><Play kind="play" /><SmallCaret /></Slot>
          <Slot label="Pause" className="ml-1 w-[54px]"><Play kind="pause" /></Slot>
          <Slot label="Reset"><Play kind="rewind" /></Slot>
          <Sep />
          <Slot label="Step"><Step tail="M10 19v13M10 19h10v8m-4-2 4 4 4-4M29 19v15" /></Slot>
          <Slot label="Step over"><Step tail="M8 19v15M2 19h24v8m-4-2 4 4 4-4M16 19v15" /></Slot>
          <Slot label="Step out"><Step tail="M4 27h14m-4-4 4 4-4 4M25 19v15M32 19v15" /></Slot>
          <Sep />
          <Slot label="Stop"><StopSign /></Slot>
          <Sep />
          <span className="ml-0.5 flex items-center gap-2 whitespace-nowrap"><WaveClock />40ns + 0</span>
        </Bar>
        <Bar className="flex-1">
          <Grip />
          <span className="ml-1.5 mr-4">Time:</span>
          <TimeLink />
          <button type="button" aria-label="More" className="ml-auto mr-4 font-bold leading-6">»</button>
        </Bar>
      </div>

      <div className="ml-0.5 flex h-[624px] border-b-2 border-t-2 border-b-[#8a8a8a] border-t-white">
        <SideTabs />
        <SignalPanes />
        <WavePane />
        <div className="flex border-r-2 border-[#8a8a8a] pb-8 pl-1 pr-1 pt-[118px]">
          <Scroll vertical className="w-7" />
        </div>
      </div>

      <div className="mt-1.5 flex h-[46px] border-b-2 border-r-2 border-t-2 border-[#8a8a8a] pb-1.5">
        <div className="flex w-[52px] items-center justify-center border-r-2 border-[#8a8a8a]">
          <Icon w={32} h={26}>
            <ellipse cx="15" cy="14" rx="14" ry="12" fill="#c43a33" stroke="#7c1f1a" />
            <ellipse cx="15" cy="14" rx="9" ry="8" stroke="#fff" strokeWidth="2" />
            <ellipse cx="15" cy="14" rx="4" ry="3" stroke="#fff" strokeWidth="2" />
            <path d="m15 14 10-9" stroke="#8f6a2a" strokeWidth="2" />
            <path d="m23 6 1-4 4-2v4h4l-3 4Z" fill="#8f9bd0" />
          </Icon>
        </div>
        <span className="ml-auto whitespace-pre border-l-2 border-[#8a8a8a] px-2.5 leading-9">3  objects selected</span>
      </div>
    </section>
  );
}

/* ---------- RTL compiler window ---------- */

const Lens = ({ sign }: { sign: ReactNode }) => (
  <Icon w={38} h={34}>
    <path d="m24 22 10 10" stroke="#b8690f" strokeWidth="6" />
    <ellipse cx="15" cy="14" rx="13" ry="12" fill="#86aed6" stroke="#6d7b88" strokeWidth="3" />
    <path d="M4 12a11 10 0 0 1 22 0Z" fill="#c5daf0" />
    {sign}
  </Icon>
);

const rtlTools: { label: string; icon: ReactNode }[] = [
  {
    label: 'Redraw',
    icon: (
      <Icon w={36} h={32}>
        <ellipse cx="18" cy="16" rx="16" ry="14" fill="#fbb24f" stroke="#d9740f" strokeWidth="3" />
        <path d="M7 6v12h13l-4-4c8-2 9 9-2 9l-3 4c21 2 21-20 3-17l-3 1Z" fill="#fff" />
      </Icon>
    ),
  },
  { label: 'Zoom fit', icon: <Lens sign={<path d="M8 9h4M8 8v5M22 9h-4M22 8v5M8 19h4M8 20v-5M22 19h-4M22 20v-5" stroke="#fff" strokeWidth="3" />} /> },
  { label: 'Zoom in', icon: <Lens sign={<path d="M15 6v16M7 14h16" stroke="#fff" strokeWidth="6" />} /> },
  { label: 'Zoom out', icon: <Lens sign={<path d="M6 14h18" stroke="#fff" strokeWidth="6" />} /> },
  {
    label: 'Zoom area',
    icon: (
      <Icon w={42} h={36}>
        <path d="M2 13V2h13M22 2h13v11M2 20v12h13M18 8v16M10 16h16" stroke="#36587c" strokeWidth="3" />
        <path d="M8 12V7h6M23 7h6v5M8 21v6h6" stroke="#36587c" strokeWidth="2" />
        <path d="m34 28 6 7" stroke="#b8690f" strokeWidth="5" />
        <ellipse cx="28" cy="23" rx="8" ry="8" fill="#9fc8ee" stroke="#5c7896" />
      </Icon>
    ),
  },
  {
    label: 'Hierarchy',
    icon: (
      <Icon w={44} h={40}>
        <path d="M19 8v18M19 11h-8v15M19 11h14v10" stroke="#b9a58a" strokeWidth="2" />
        <path d="M15 2h9v7h-9Z" fill="#ecb5b5" stroke="#d38f8f" />
        <path d="M7 14h9v8H7Z" fill="#f7cf9c" stroke="#d99a4c" />
        <path d="M1 27h9v8H1ZM15 27h9v8h-9Z" fill="#d4dcea" stroke="#7f8da8" strokeWidth="2" />
        <path d="M26 13v23l5-4 5 8 4-2-4-8h6Z" fill="#fff" stroke="#111" strokeWidth="2" />
      </Icon>
    ),
  },
  {
    label: 'Highlight',
    icon: (
      <Icon w={38} h={34}>
        <path d="M2 2h26v23H2Z" fill="#8fabdf" stroke="#3f58a8" strokeWidth="2" />
        <path d="M7 10h16l-8 8Z" fill="#4a66b4" stroke="#2d3f85" />
        <path d="m27 22 9-9" stroke="#b8690f" strokeWidth="4" />
        <ellipse cx="23" cy="26" rx="8" ry="7" fill="#b9d7f2" stroke="#5c7896" />
      </Icon>
    ),
  },
  {
    label: 'Save',
    icon: (
      <Icon w={36} h={32}>
        <path d="M2 2h32v28H5l-3-3Z" fill="#5e6fc0" stroke="#333f8c" strokeWidth="2" />
        <path d="M6 2h24v15H6Z" fill="#f3f5fb" />
        <path d="M9 20h18v9H9Z" fill="#d2d8e8" />
        <path d="M11 22h5v6h-5Z" fill="#3c4a90" />
      </Icon>
    ),
  },
  {
    label: 'Print',
    icon: (
      <Icon w={44} h={36}>
        <path d="m2 23 6-5h28l6 5v8l-4 4H6l-4-4Z" fill="#a9a9a9" stroke="#6b6b6b" strokeWidth="2" />
        <path d="M10 1h24v18H10Z" fill="#ececec" stroke="#8a8a8a" strokeWidth="2" />
        <path d="M4 23h36v4H4Z" fill="#f2f2f2" />
      </Icon>
    ),
  },
];

function Schematic() {
  const wire = { stroke: '#f4a07a', strokeWidth: 2, fill: 'none' };
  return (
    <svg viewBox="0 0 1046 643" className="block w-full bg-black" role="img" aria-label="or1 schematic">
      <g {...wire}>
        <path d="M19 0v643M1023 0v643M61 16h920v612H61Z" />
        <path d="M202 217h43l14 8-14 9h-43ZM202 281h43l14 9-14 8h-43ZM782 248h42l14 9-14 8h-42Z" />
        <path d="M259 225h35M405 225h48M259 290h35M405 290h48M602 257h33M747 257h35" />
        <path d="M443 208h63c45 2 76 20 96 49-20 31-52 48-96 50h-63c28-30 28-70 4-100" />
      </g>
      <path d="M294 225h111M294 290h111M635 257h112" stroke="#7fd69a" strokeWidth="2" />
      <g fill="#2ad4d4" fontFamily="Liberation Mono, monospace" fontSize="38">
        <text x="519" y="7">A</text>
        <text x="174" y="232">a</text>
        <text x="174" y="300">b</text>
        <text x="843" y="264">c</text>
        <text x="497" y="201">g1</text>
        <text x="486" y="281">or2</text>
        <text x="27" y="322">0</text>
        <text x="989" y="322">0</text>
        <text x="-4" y="618" style={{ whiteSpace: 'pre' }}>ge:1 of 1,   Date:Fri Nov 19 12:59:51 2010</text>
      </g>
      <path d="M956 599h15v19h-15Z" fill="none" stroke="#2ad4d4" strokeWidth="2" strokeDasharray="2 2" />
      <g fill="#f2f200" fontFamily="Liberation Mono, monospace" fontWeight="700" fontSize="16">
        <text x="411" y="221">in_0</text>
        <text x="411" y="286">in_1</text>
        <text x="602" y="254">z</text>
      </g>
    </svg>
  );
}

function RtlCompiler() {
  const [command, setCommand] = useState('or1 1');
  const tab = 'h-[42px] rounded-t-lg border-l-4 border-t-4 border-white border-r-4 border-r-[#8a8a8a] bg-[#efeff0]';
  const box = 'h-11 border-l-2 border-t-4 border-[#8f8f8f]';
  const pageInput = "h-[30px] w-[74px] border-l-4 border-t-4 border-[#909090] bg-white px-0.5 font-['DejaVu_Sans_Mono',monospace] outline-none";
  return (
    <section className="bg-[#e7e6e8]">
      <DesktopPanel time="Fri Nov 19,  1:00 PM" />
      <div className="flex h-[26px] items-start justify-between overflow-hidden bg-[#d8d7d9] px-0.5 pt-1.5">
        <WinMenuIcon off />
        <span className="pl-20 pt-0.5 text-[23px] font-bold leading-7 text-[#858587]">root@localhost:~</span>
        <WinButtons kinds={['min', 'restore', 'close']} off />
      </div>
      <div className="flex h-[967px] overflow-hidden">
        <div className="min-w-0 flex-1 border-r-4 border-black bg-[#e4e4e6]">
          <TitleBar title="Cadence Encounter(R) RTL Compiler v08.10-s121_1 - /root/sara1/rclabs/work" kinds={['min', 'max', 'close']} className="h-[41px] rounded-t-lg" />
          <div className="mx-2 border-l-2 border-[#8a8a8a] bg-[#efeff0] font-['Liberation_Sans',Arial,sans-serif] text-xl">
            <div className="flex h-[46px] items-center gap-5 border-b-2 border-r-4 border-[#8a8a8a] pl-3 pr-3 pt-1">
              <Menu
                items={[
                  ['', 'F', 'ile'],
                  ['', 'R', 'eport'],
                  ['', 'T', 'ools'],
                  ['', 'P', 'references'],
                  ['', 'W', 'indow'],
                  ['', 'H', 'elp'],
                ]}
              />
              <span className="ml-auto font-['DejaVu_Sans',sans-serif]">
                <Cadence className="text-[26px]" />
              </span>
            </div>
            <div className="h-2 bg-[#c80000]" />

            <div className="flex h-[836px] pl-2">
              <div className="flex w-[508px] shrink-0 flex-col pt-1">
                <div className="flex gap-1">
                  <button type="button" className={`w-[127px] ${tab}`}>Hierarchy</button>
                  <button type="button" className={`w-[84px] ${tab}`}>HDL</button>
                </div>
                <div className="flex flex-1 flex-col border-4 border-b-8 border-b-[#909090] border-l-white border-r-[#909090] border-t-white pb-1 pr-1 pt-2">
                  <ul className="flex-1 border-l-4 border-t-4 border-[#909090] bg-white pl-[46px] font-['DejaVu_Sans_Mono',monospace]">
                    <li>or1</li>
                  </ul>
                </div>
              </div>
              <div className="relative w-1 shrink-0 bg-[#222]">
                <span className="absolute -left-2 top-4 h-4 w-4 border-2 border-b-[#888] border-l-white border-r-[#888] border-t-white bg-[#e4e4e4]" />
              </div>
              <div className="flex min-w-0 flex-1 flex-col pt-0.5">
                <div className="flex items-end gap-0.5">
                  <button type="button" className="h-11 w-[139px] rounded-t-lg border-l-2 border-r-4 border-t-2 border-[#555] bg-[#efeff0]">Schematic</button>
                  <button type="button" disabled className={`w-[114px] text-[#9c9c9e] ${tab}`}>Physical</button>
                </div>
                <div className="mr-1.5 flex flex-1 flex-col border-b-8 border-r-4 border-t-4 border-b-[#909090] border-r-[#909090] border-t-white">
                  <div className="flex h-[70px] items-center pl-2.5 pr-1">
                    {rtlTools.map((t) => (
                      <button key={t.label} type="button" aria-label={t.label} className="flex w-[62px] justify-center">
                        {t.icon}
                      </button>
                    ))}
                    <input aria-label="Page" defaultValue="1" className={`ml-auto ${pageInput}`} />
                    <input aria-label="Sheet" defaultValue="1" className={`ml-1.5 ${pageInput}`} />
                  </div>
                  <div className="flex flex-1 pl-1.5">
                    <div className="flex min-w-0 flex-1 flex-col">
                      <Schematic />
                      <Scroll dark className="mt-1.5 h-6" />
                    </div>
                    <Scroll vertical dark className="mb-8 ml-1.5 w-[26px]" />
                    <span className="w-1" />
                  </div>
                  <div className="flex items-center gap-1.5 pl-3">
                    <input
                      aria-label="Selected object"
                      value={command}
                      onChange={(e) => setCommand(e.target.value)}
                      className="h-9 min-w-0 flex-1 border-l-4 border-t-4 border-[#909090] bg-[#f0eff1] outline-none"
                    />
                    <button type="button" aria-label="Download" className="flex h-10 w-[39px] items-center justify-center border-4 border-b-[#7a0000] border-l-[#f08080] border-r-[#7a0000] border-t-[#f08080] bg-[#c80000]">
                      <svg width="20" height="24" viewBox="0 0 20 24" aria-hidden="true">
                        <path d="M8 1h4v9h7l-9 8-9-8h7ZM1 20h18v3H1Z" fill="#fff" />
                      </svg>
                    </button>
                  </div>
                </div>
              </div>
            </div>

            <div className="mt-3.5 flex h-6 gap-3.5 overflow-hidden pl-1.5 pr-1.5">
              <div className="h-6 w-12 shrink-0 bg-[#0f0]" />
              <div className={`flex-[78] ${box}`} />
              <div className={`flex-[37] pt-1.5 text-center text-[21px] leading-6 ${box}`}>Design is unmapped</div>
              <div className={`flex-[37] ${box}`} />
            </div>
          </div>
        </div>
        <div className="mt-[61px] flex w-[11px] shrink-0 flex-col border-r-2 border-[#77767a] bg-[#c4c3c6]">
          <div className="flex h-7 items-center border-b-2 border-t-2 border-[#77767a] bg-[#e4e3e6]">
            <span className="h-1 w-1 rounded-full bg-black" />
          </div>
          <div className="mt-auto h-[53px] border-b-2 border-t-2 border-[#77767a] bg-[#e4e3e6]" />
          <div className="h-6 border-b-2 border-[#77767a] bg-[#e4e3e6]" />
        </div>
      </div>
      <div className="h-[42px] border-t-4 border-[#f6f6f6]" />
    </section>
  );
}

export default function App() {
  return (
    <div className="min-h-screen bg-white p-20 font-['DejaVu_Sans',Verdana,sans-serif] text-black">
      <main className="border-2 border-black pb-[84px] font-normal">
        <h1 className="pb-[47px] pl-10 pt-10 text-center font-['Open_Sans',sans-serif] text-[33px] leading-[42px]">VLSI LAB MANUAL</h1>
        <div className="ml-[165px] mr-[66px] flex flex-col">
          <SimVision />
          <div className="h-[41px] bg-[#e7e6e8]" />
          <RtlCompiler />
        </div>
        <footer className="ml-[154px] mr-[154px] mt-[115px] font-['Open_Sans',sans-serif] text-[34px] leading-[42px]">
          <div className="h-[9px] bg-[#632523]" />
          <div className="mt-[3px] h-[3px] bg-[#632523]" />
          <div className="flex justify-between px-1.5 pt-1">
            <span>Bearys Institute of Technology, Dept. of ECE, Mangaluru</span>
            <span>Page 26</span>
          </div>
        </footer>
      </main>
    </div>
  );
}
